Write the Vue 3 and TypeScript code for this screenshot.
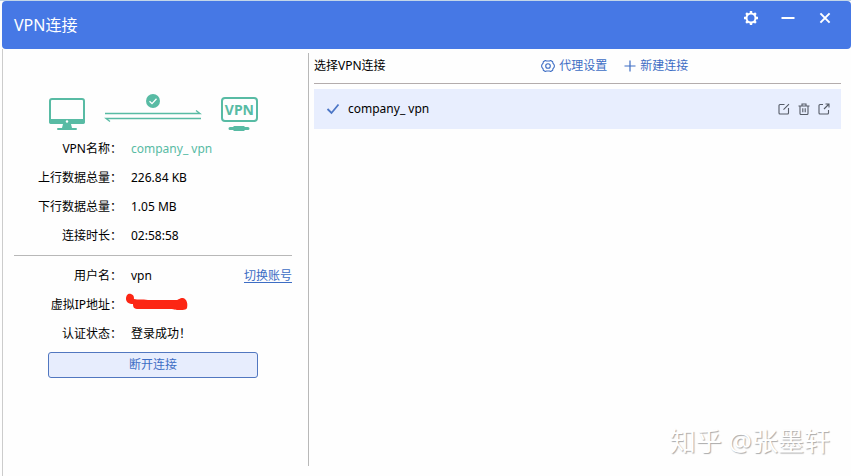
<script setup lang="ts">
interface InfoRow {
  label: string
  value: string
  accent?: boolean
}

interface Connection {
  id: number
  name: string
  active: boolean
}

const traffic: InfoRow[] = [
  { label: 'VPN名称：', value: 'company_ vpn', accent: true },
  { label: '上行数据总量：', value: '226.84 KB' },
  { label: '下行数据总量：', value: '1.05 MB' },
  { label: '连接时长：', value: '02:58:58' },
]

const connections: Connection[] = [{ id: 1, name: 'company_ vpn', active: true }]
</script>

<template>
  <div class="window">
    <header class="titlebar">
      <h1>VPN连接</h1>
      <div class="controls">
        <button type="button" aria-label="设置">
          <svg width="16" height="16" viewBox="0 0 16 16" fill="none" stroke="currentColor">
            <circle cx="8" cy="8" r="4.500" stroke-width="2" />
            <path d="M8 1v2.400M8 12.600V15M1 8h2.400M12.600 8H15M3.100 3.100l1.600 1.600M11.300 11.300l1.600 1.600M12.900 3.100l-1.600 1.600M4.700 11.300l-1.600 1.600" stroke-width="2.400" />
          </svg>
        </button>
        <button type="button" aria-label="最小化">
          <svg width="16" height="16" viewBox="0 0 16 16" fill="none" stroke="currentColor"><path d="M1.500 8h13" stroke-width="2" /></svg>
        </button>
        <button type="button" aria-label="关闭">
          <svg width="16" height="16" viewBox="0 0 16 16" fill="none" stroke="currentColor"><path d="m3.400 3.400 9.200 9.200m0-9.200-9.200 9.200" stroke-width="2" /></svg>
        </button>
      </div>
    </header>

    <main class="content">
      <section class="status">
        <div class="diagram">
          <svg class="monitor" width="38" height="34" viewBox="0 0 38 34" fill="none">
            <rect x="2" y="2" width="34" height="24" rx="2" stroke="currentColor" stroke-width="2" />
            <path d="M1 22h36v3a2 2 0 0 1-2 2H3a2 2 0 0 1-2-2zM15 27h8l1 4h4a1 1 0 0 1 0 2H10a1 1 0 0 1 0-2h4z" fill="currentColor" />
            <circle cx="19" cy="24.500" r="1.200" fill="#fff" />
          </svg>
          <div class="link">
            <svg width="14" height="14" viewBox="0 0 14 14" fill="none">
              <circle cx="7" cy="7" r="7" fill="currentColor" />
              <path d="m3.500 7.200 2.500 2.400 4.500-4.800" stroke="#fff" stroke-width="1.300" />
            </svg>
            <svg width="98" height="12" viewBox="0 0 98 12" fill="none" stroke="currentColor" stroke-width="1.300">
              <path d="M1 3.500h95l-4-3M97 8.500H2l4 3" />
            </svg>
          </div>
          <div class="server">
            <span class="screen">VPN</span>
            <svg width="22" height="5" viewBox="0 0 22 5" fill="currentColor"><path d="M2 1h3l1-1h10l1 1h3a1.500 1.500 0 0 1 0 3h-3l-1 1H6L5 4H2a1.500 1.500 0 0 1 0-3z" /></svg>
          </div>
        </div>

        <dl class="info">
          <div v-for="row in traffic" :key="row.label" class="row">
            <dt>{{ row.label }}</dt>
            <dd :class="{ accent: row.accent }">{{ row.value }}</dd>
          </div>
        </dl>
        <hr />
        <dl class="info">
          <div class="row">
            <dt>用户名：</dt>
            <dd>vpn</dd>
            <dd class="switch"><a href="#">切换账号</a></dd>
          </div>
          <div class="row">
            <dt>虚拟IP地址：</dt>
            <dd class="masked">
              <svg width="64" height="20" viewBox="0 0 64 20" aria-hidden="true">
                <path d="M1 6C1 1 4 0 6 1c3 1 3 3 3 5 4 1 8 0 14 1h28c3 0 3-2 7-2 4 1 5 6 4 10-1 2-4 2-9 2-3 0-4-1-9-1H12c-4 0-4-4-4-5-4 0-7-2-7-5z" fill="#fc2614" />
              </svg>
            </dd>
          </div>
          <div class="row">
            <dt>认证状态：</dt>
            <dd>登录成功！</dd>
          </div>
        </dl>
        <button class="disconnect" type="button">断开连接</button>
      </section>

      <section class="list">
        <div class="toolbar">
          <h2>选择VPN连接</h2>
          <div class="actions">
            <button type="button">
              <svg width="14" height="14" viewBox="0 0 14 14" fill="none" stroke="currentColor" stroke-width="1.100">
                <path d="M4.300 1.500 5.600 2h2.800l1.300-.5 2 1.200.2 1.500 1.400 1.800v2l-1.400 1.800-.2 1.500-2 1.200-1.300-.5H5.600l-1.300.5-2-1.200-.2-1.500L.7 8V6l1.400-1.800.2-1.500z" stroke-linejoin="round" />
                <circle cx="7" cy="7" r="2.300" />
              </svg>
              代理设置
            </button>
            <button type="button">
              <svg width="12" height="12" viewBox="0 0 12 12" fill="none" stroke="currentColor" stroke-width="1.200"><path d="M6 .5v11M.5 6h11" /></svg>
              新建连接
            </button>
          </div>
        </div>
        <ul>
          <li v-for="item in connections" :key="item.id">
            <svg v-if="item.active" class="tick" width="14" height="12" viewBox="0 0 14 12" fill="none" stroke="currentColor" stroke-width="1.800"><path d="m1.500 6 4 4 7-8.500" /></svg>
            <span class="name">{{ item.name }}</span>
            <button type="button" aria-label="编辑">
              <svg width="12" height="12" viewBox="0 0 12 12" fill="none" stroke="currentColor" stroke-width="1.100"><path d="M6.500 1.500H2a1 1 0 0 0-1 1V10a1 1 0 0 0 1 1h7.500a1 1 0 0 0 1-1V5M5.500 6.700l5.500-5.500" /></svg>
            </button>
            <button type="button" aria-label="删除">
              <svg width="12" height="12" viewBox="0 0 12 12" fill="none" stroke="currentColor" stroke-width="1.100"><path d="M.5 3h11M4 3V1h4v2M2 3v7.500a1 1 0 0 0 1 1h6a1 1 0 0 0 1-1V3M4.800 5.200v4M7.200 5.200v4" /></svg>
            </button>
            <button type="button" aria-label="分享">
              <svg width="12" height="12" viewBox="0 0 12 12" fill="none" stroke="currentColor" stroke-width="1.100"><path d="M5 1.500H2a1 1 0 0 0-1 1V10a1 1 0 0 0 1 1h7.500a1 1 0 0 0 1-1V7M7.500 1H11v3.500M11 1 6 6" /></svg>
            </button>
          </li>
        </ul>
      </section>
    </main>
    <div class="watermark">知乎 @张墨轩</div>
  </div>
</template>

<style>
body {
  margin: 0;
  background: #fff;
}
</style>

<style scoped>
* {
  box-sizing: border-box;
}

.window {
  position: relative;
  display: flex;
  flex-direction: column;
  min-height: 100vh;
  padding-left: 2px;
  border-top: 1px solid #c3d6e8;
  background: #fefefe;
  color: #000;
  font: 12px/20px "Noto Sans", "Noto Sans CJK SC", sans-serif;
}

h1,
h2,
dl,
dd,
ul {
  margin: 0;
  padding: 0;
  font-weight: 400;
}

button {
  display: flex;
  align-items: center;
  padding: 0;
  border: 0;
  background: none;
  color: inherit;
  font: inherit;
  cursor: pointer;
}

svg {
  display: block;
  flex: none;
}

.titlebar {
  display: flex;
  justify-content: space-between;
  height: 48px;
  padding: 0 18px 0 12px;
  border-radius: 4px;
  background: #4678e5;
  color: #fff;
}

h1 {
  font-size: 16px;
  line-height: 48px;
}

.controls {
  display: flex;
  align-items: flex-start;
  gap: 21px;
  padding-top: 9px;
}

.content {
  display: flex;
  flex: 1;
  padding: 4px 10px 10px 0;
  border-left: 1px solid #ccc;
}

.status {
  flex: none;
  width: 306px;
  padding: 41px 16px 0 11px;
  border-right: 1px solid #b8b8b8;
}

.diagram {
  display: flex;
  justify-content: space-between;
  height: 40px;
  padding: 0 34px;
  color: #58bba4;
}

.monitor {
  margin-top: 3px;
}

.link {
  display: flex;
  flex-direction: column;
  align-items: center;
  gap: 2px;
}

.server {
  display: flex;
  flex-direction: column;
  align-items: center;
  gap: 4px;
  padding-top: 3px;
}

.screen {
  padding: 1px 2px;
  border: 2px solid;
  border-radius: 4px;
  font-size: 14px;
  font-weight: 700;
  line-height: 19px;
}

.row {
  display: flex;
  align-items: center;
  gap: 9px;
  height: 29px;
}

dt {
  width: 108px;
  text-align: right;
}

.accent {
  color: #58bba4;
}

hr {
  height: 1px;
  margin: 5px 0;
  border: 0;
  background: #b8b8b8;
}

.switch {
  margin-left: auto;
}

a,
.actions {
  color: #3d6dc4;
}

a {
  text-underline-offset: 2px;
}

.masked {
  margin: -4px 0 0 -6px;
}

.disconnect {
  justify-content: center;
  width: 210px;
  height: 26px;
  margin: 4px auto 0;
  border: 1px solid #5177c0;
  border-radius: 3px;
  background: #e7edfd;
  color: #3d6dc4;
}

.list {
  flex: 1;
  padding-left: 5px;
}

.toolbar {
  display: flex;
  align-items: center;
  justify-content: space-between;
  height: 31px;
  padding-bottom: 4px;
  border-bottom: 1px solid #b3acac;
}

h2 {
  font-size: 12px;
}

.actions {
  display: flex;
  gap: 17px;
  margin-right: 29%;
}

.actions button {
  gap: 4px;
}

ul {
  padding-top: 5px;
  list-style: none;
}

li {
  display: flex;
  align-items: center;
  gap: 8px;
  height: 40px;
  padding: 0 11px 0 12px;
  background: #e8eefe;
  color: #555b66;
}

.tick {
  color: #4c76c6;
}

.name {
  flex: 1;
  color: #000;
}

.watermark {
  position: absolute;
  right: 21px;
  bottom: 16px;
  color: #fff;
  font-size: 26px;
  line-height: 38px;
  text-shadow: 1px 1px 1px #aaa;
}
</style>
